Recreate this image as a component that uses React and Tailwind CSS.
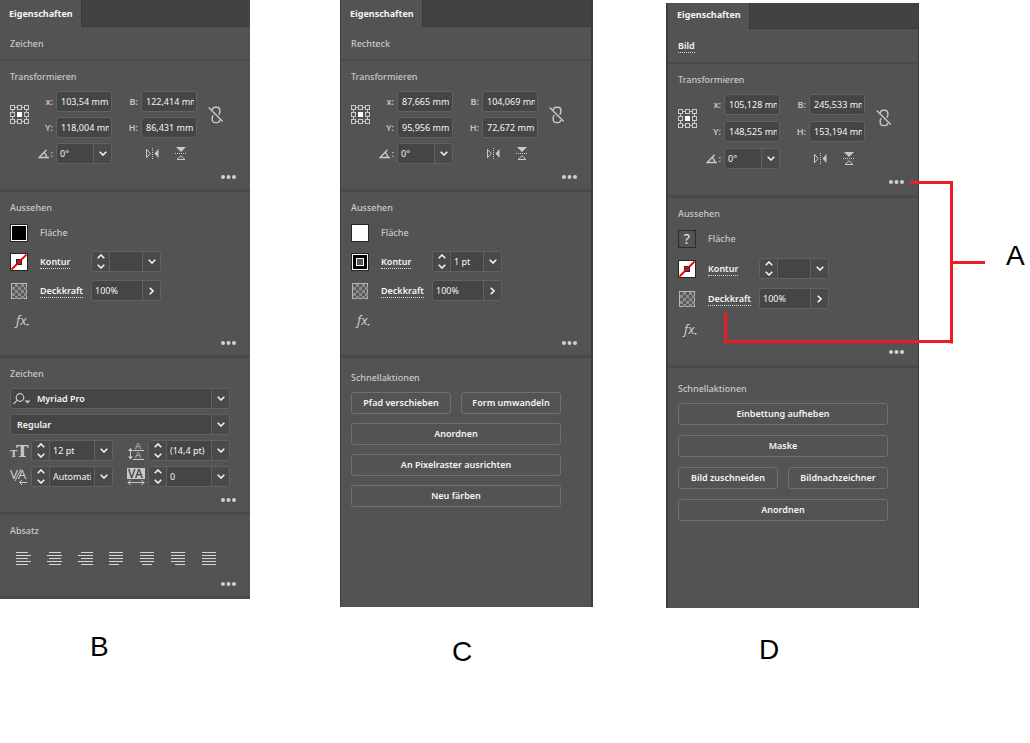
import React, { useId } from "react";

const ICON = "#c9c9c9";

/* ---------- small icons ---------- */

const ChevronDown = () => (
  <svg width="8" height="5" viewBox="0 0 8 5" fill="none" stroke="#f2f2f2" strokeWidth="1.6">
    <path d="M.7.7 4 4 7.3.7" />
  </svg>
);

const ChevronUp = () => (
  <svg width="8" height="5" viewBox="0 0 8 5" fill="none" stroke="#f2f2f2" strokeWidth="1.6">
    <path d="M.7 4.3 4 1l3.3 3.3" />
  </svg>
);

const ChevronRight = () => (
  <svg width="5" height="8" viewBox="0 0 5 8" fill="none" stroke="#f2f2f2" strokeWidth="1.6">
    <path d="M.7.7 4 4 .7 7.3" />
  </svg>
);

const ReferencePoint = () => (
  <svg width="19" height="19" viewBox="0 0 19 19" fill="none" stroke={ICON}>
    {[0.5, 7.5, 14.5].map((y) =>
      [0.5, 7.5, 14.5].map((x) =>
        x === 7.5 && y === 7.5 ? (
          <rect key={`${x}-${y}`} x="7.5" y="7.5" width="4" height="4" fill="#fff" stroke="#fff" />
        ) : (
          <rect key={`${x}-${y}`} x={x} y={y} width="4" height="4" />
        )
      )
    )}
    <path d="M5 2.5h2M12 2.5h2M5 16.5h2M12 16.5h2M2.5 5v2M2.5 12v2M16.5 5v2M16.5 12v2" />
  </svg>
);

const LinkOff = () => (
  <svg width="16" height="18" viewBox="0 0 16 18" fill="none" stroke={ICON} strokeWidth="1.4">
    <path d="M4.200 4.200a3 3 0 0 1 3-3h1.600a3 3 0 0 1 3 3v2.300a2.300 2.300 0 0 1-1.300 2" />
    <path d="M5.500 9.300a2.300 2.300 0 0 0-1.300 2v2.300a3 3 0 0 0 3 3h1.600a3 3 0 0 0 3-2.600" />
    <path d="m.7 1.500 14 14" />
  </svg>
);

const AngleIcon = () => (
  <svg width="12" height="10" viewBox="0 0 12 10" fill="none" stroke={ICON} strokeWidth="1.3">
    <path d="M8.500.700 1.200 8.500H11M6 3.500c1.700 1 2.600 2.800 2.600 5" />
  </svg>
);

const FlipHorizontal = () => (
  <svg width="14" height="11" viewBox="0 0 14 11" fill="none" stroke={ICON}>
    <path d="M1.500 1.300v8.400L5.200 5.500z" />
    <path d="M7.500 0v11" strokeDasharray="1 1" />
    <path d="M13.500 1v9L9.500 5.500z" fill={ICON} stroke="none" />
  </svg>
);

const FlipVertical = () => (
  <svg width="12" height="13" viewBox="0 0 12 13" fill="none" stroke={ICON}>
    <path d="M1 0h10L6 5z" fill={ICON} stroke="none" />
    <path d="M0 6.500h12" strokeDasharray="1 1" />
    <path d="M2 12.500h8L6 8.800z" />
  </svg>
);

const MoreDots = () => (
  <svg width="15" height="4" viewBox="0 0 15 4" fill="#d0d0d0">
    <circle cx="2" cy="2" r="2" />
    <circle cx="7.5" cy="2" r="2" />
    <circle cx="13" cy="2" r="2" />
  </svg>
);

const SearchIcon = () => (
  <svg width="18" height="12" viewBox="0 0 18 12" fill="none" stroke={ICON} strokeWidth="1.2">
    <circle cx="7" cy="4.5" r="3.8" />
    <path d="M4.300 7.200.500 11" />
    <path d="M11.500 7.500h6l-3 3z" fill={ICON} stroke="none" />
  </svg>
);

const FontSizeIcon = () => (
  <svg
    width="18"
    height="18"
    viewBox="0 0 18 18"
    fill={ICON}
    className="overflow-visible font-['DejaVu_Serif',serif] font-bold"
  >
    <text x="0" y="15" fontSize="10">T</text>
    <text x="6" y="15" fontSize="17">T</text>
  </svg>
);

const LeadingIcon = () => (
  <svg
    width="18"
    height="18"
    viewBox="0 0 18 18"
    fill={ICON}
    className="overflow-visible font-['Liberation_Sans',sans-serif]"
  >
    <text x="8" y="7" fontSize="9">A</text>
    <text x="8" y="16" fontSize="9">A</text>
    <path d="M6 8.500h11M6 17.500h11M3.500 8v8" stroke={ICON} />
    <path d="m1 9 2.500-3L6 9zM1 14.500l2.500 3 2.500-3z" />
  </svg>
);

const KerningIcon = () => (
  <svg
    width="18"
    height="18"
    viewBox="0 0 18 18"
    fill={ICON}
    className="overflow-visible font-['Noto_Sans',sans-serif]"
  >
    <text x="0" y="11" fontSize="13">V</text>
    <text x="8" y="11" fontSize="13">A</text>
    <path d="M5 13 11 1M9.500 14.500H17M12 12l-2.500 2.500L12 17" fill="none" stroke={ICON} />
  </svg>
);

const TrackingIcon = () => (
  <svg width="18" height="18" viewBox="0 0 18 18" className="overflow-visible font-['Noto_Sans',sans-serif]">
    <rect width="18" height="11" fill={ICON} />
    <text x="1" y="10" fontSize="12" fontWeight="500" fill="#3c3c3c">V</text>
    <text x="8" y="10" fontSize="12" fontWeight="500" fill="#3c3c3c">A</text>
    <path d="M1 14.500h16M3.500 12 1 14.500 3.500 17M14.500 12l2.500 2.500-2.500 2.500" fill="none" stroke={ICON} />
  </svg>
);

/* start and length of the five lines of each alignment icon */
const alignments = [
  { name: "Linksbündig", lines: [[0, 12], [0, 15], [0, 12], [0, 15], [0, 12]] },
  { name: "Zentriert", lines: [[2, 12], [0, 15], [2, 12], [0, 15], [2, 12]] },
  { name: "Rechtsbündig", lines: [[3, 12], [0, 15], [3, 12], [0, 15], [3, 12]] },
  { name: "Blocksatz links", lines: [[0, 14], [0, 14], [0, 14], [0, 14], [0, 10]] },
  { name: "Blocksatz zentriert", lines: [[0, 14], [0, 14], [0, 14], [0, 14], [2, 10]] },
  { name: "Blocksatz rechts", lines: [[0, 14], [0, 14], [0, 14], [0, 14], [4, 10]] },
  { name: "Blocksatz", lines: [[0, 14], [0, 14], [0, 14], [0, 14], [0, 14]] },
];

const AlignIcon = ({ lines }) => (
  <svg width="15" height="13" viewBox="0 0 15 13" fill="#d6d6d6">
    {lines.map(([x, w], i) => (
      <rect key={i} x={x} y={i * 3} width={w} height="1" />
    ))}
  </svg>
);

/* ---------- swatches ---------- */

const FillSwatch = ({ kind }) => {
  if (kind === "mixed") {
    return (
      <span className="w-[18px] h-[18px] border border-[#2b2b2b] flex items-center justify-center text-sm leading-4 font-medium text-[#dcdcdc]">
        ?
      </span>
    );
  }
  return (
    <svg width="18" height="18" viewBox="0 0 18 18">
      <rect width="18" height="18" fill="#262626" />
      <rect x="1" y="1" width="16" height="16" fill="#fff" />
      {kind === "black" && <rect x="2" y="2" width="14" height="14" fill="#000" />}
    </svg>
  );
};

const StrokeSwatch = ({ kind }) => (
  <svg width="18" height="18" viewBox="0 0 18 18">
    <rect width="18" height="18" fill="#262626" />
    <rect x="1" y="1" width="16" height="16" fill="#fff" />
    {kind === "none" ? (
      <>
        <rect x="6.5" y="6.5" width="5" height="5" fill="#535353" stroke="#262626" />
        <path d="M1.500 16.500l15-15" stroke="#f00000" strokeWidth="1.8" />
      </>
    ) : (
      <>
        <rect x="2" y="2" width="14" height="14" fill="#000" />
        <rect x="5.5" y="5.5" width="7" height="7" fill="#535353" stroke="#fff" />
      </>
    )}
  </svg>
);

const OpacitySwatch = () => (
  <svg width="18" height="18" viewBox="0 0 18 18">
    <rect x="1.5" y="1.5" width="15" height="15" fill="#5a5a5a" stroke="#b8b8b8" />
    {[0, 1, 2, 3, 4].map((r) =>
      [0, 1, 2, 3, 4].map(
        (c) =>
          (r + c) % 2 === 1 && (
            <rect key={`${r}-${c}`} x={2 + c * 3} y={2 + r * 3} width="3" height="3" fill="#8c8c8c" />
          )
      )
    )}
  </svg>
);

/* ---------- controls ---------- */

const boxClass = "h-[21px] flex rounded-[3px] border border-[#616161] bg-[#454545] overflow-hidden";
const cellClass = "w-[18px] shrink-0 flex flex-col items-center justify-center bg-[#4a4a4a] border-[#616161]";

const TextField = ({ id, label, value }) => (
  <>
    <label htmlFor={id} className="text-right font-semibold text-[#c4c4c4]">
      {label}
    </label>
    <div className={boxClass}>
      <input id={id} defaultValue={value} className="w-full min-w-0 ml-1 mr-[2px] outline-none text-[#f5f5f5]" />
    </div>
  </>
);

const Combo = ({ id, label, value, stepper, arrow = "down", className = "" }) => (
  <div className={`${boxClass} ${className}`}>
    {stepper && (
      <button type="button" aria-label={`${label} ändern`} className={`${cellClass} gap-[5px] border-r`}>
        <ChevronUp />
        <ChevronDown />
      </button>
    )}
    <input
      id={id}
      aria-label={id ? undefined : label}
      defaultValue={value}
      className="flex-1 w-full min-w-0 mx-[3px] outline-none text-[#f5f5f5]"
    />
    <button type="button" aria-label={`${label} auswählen`} className={`${cellClass} border-l`}>
      {arrow === "right" ? <ChevronRight /> : <ChevronDown />}
    </button>
  </div>
);

const SelectBox = ({ label, value, icon }) => (
  <div className={boxClass}>
    {icon && <span className="pl-[2px] flex items-center">{icon}</span>}
    <div className="flex-1 grid grid-cols-[1fr_18px]">
      <select
        aria-label={label}
        defaultValue={value}
        className="col-span-2 row-start-1 col-start-1 appearance-none pl-[6px] outline-none font-semibold text-[#f5f5f5]"
      >
        <option>{value}</option>
      </select>
      <span className={`${cellClass} border-l row-start-1 col-start-2 pointer-events-none`}>
        <ChevronDown />
      </span>
    </div>
  </div>
);

/* ---------- sections ---------- */

const Section = ({ title, roomy, children }) => (
  <section
    className={`flex flex-col pt-2 pl-[10px] pr-[14px] border-b-[3px] border-[#4a4a4a] ${roomy ? "pb-[9px]" : "pb-2"}`}
  >
    <h2 className="leading-4 mb-[6px] font-medium text-[#c8c8c8]">{title}</h2>
    {children}
    <button type="button" aria-label={`${title}: weitere Optionen`} className="mt-[9px] ml-auto h-2 flex items-center">
      <MoreDots />
    </button>
  </section>
);

const Transform = ({ x, y, w, h, roomy }) => {
  const id = useId();
  return (
    <Section title="Transformieren" roomy={roomy}>
      <div
        className={`grid grid-cols-[20px_20px_56px_23px_56px_24px] gap-x-[3px] items-center ${
          roomy ? "gap-y-[6px]" : "gap-y-[5px]"
        }`}
      >
        <button type="button" aria-label="Bezugspunkt" className="row-span-2">
          <ReferencePoint />
        </button>
        <TextField id={`${id}x`} label="x:" value={x} />
        <TextField id={`${id}w`} label="B:" value={w} />
        <button type="button" aria-label="Proportionen erhalten" className="row-span-2 justify-self-end">
          <LinkOff />
        </button>
        <TextField id={`${id}y`} label="Y:" value={y} />
        <TextField id={`${id}h`} label="H:" value={h} />
        <label
          htmlFor={`${id}a`}
          className="col-span-2 flex items-center justify-end gap-px font-semibold text-[#c4c4c4]"
        >
          <AngleIcon />:
        </label>
        <Combo id={`${id}a`} label="Winkel" value="0°" />
        <div className="col-span-2 flex items-center gap-4 pl-[30px]">
          <button type="button" aria-label="Horizontal spiegeln">
            <FlipHorizontal />
          </button>
          <button type="button" aria-label="Vertikal spiegeln">
            <FlipVertical />
          </button>
        </div>
      </div>
    </Section>
  );
};

const dotted = "leading-[13px] font-semibold text-[#f5f5f5] border-b border-dotted border-[#d8d8d8]";

const Appearance = ({ fill, stroke, weight, roomy }) => (
  <Section title="Aussehen" roomy={roomy}>
    <div className={`flex flex-col ${roomy ? "gap-[9px]" : "gap-2"}`}>
      <div className="h-[21px] flex items-center gap-3">
        <button type="button" aria-label="Flächenfarbe">
          <FillSwatch kind={fill} />
        </button>
        <span className="font-medium text-[#c8c8c8]">Fläche</span>
      </div>
      <div className="h-[21px] flex items-center">
        <button type="button" aria-label="Konturfarbe">
          <StrokeSwatch kind={stroke} />
        </button>
        <div className="w-[63px] pl-3 flex">
          <button type="button" className={dotted}>Kontur</button>
        </div>
        <Combo label="Konturstärke" value={weight} stepper className="w-[70px]" />
      </div>
      <div className="h-[21px] flex items-center">
        <OpacitySwatch />
        <div className="w-[63px] pl-3 flex">
          <button type="button" className={dotted}>Deckkraft</button>
        </div>
        <Combo label="Deckkraft" value="100%" arrow="right" className="w-[70px]" />
      </div>
      <button type="button" aria-label="Effekt hinzufügen" className="h-[21px] ml-[6px] self-start flex items-center">
        <span className="text-[13px] italic leading-4 text-[#c9c9c9]">fx</span>
        <svg width="3" height="2" viewBox="0 0 3 2" className="mt-[10px]">
          <path d="M0 0h3L1.500 2z" fill={ICON} />
        </svg>
      </button>
    </div>
  </Section>
);

const Character = () => (
  <Section title="Zeichen">
    <div className="w-[220px] flex flex-col gap-[5px]">
      <SelectBox label="Schriftfamilie" value="Myriad Pro" icon={<SearchIcon />} />
      <SelectBox label="Schriftschnitt" value="Regular" />
      <div className="grid grid-cols-2 gap-x-[14px] gap-y-[5px]">
        <div className="flex items-center gap-[3px]">
          <FontSizeIcon />
          <Combo label="Schriftgrad" value="12 pt" stepper className="flex-1" />
        </div>
        <div className="flex items-center gap-[3px]">
          <LeadingIcon />
          <Combo label="Zeilenabstand" value="(14,4 pt)" stepper className="flex-1" />
        </div>
        <div className="flex items-center gap-[3px]">
          <KerningIcon />
          <Combo label="Kerning" value="Automatisch" stepper className="flex-1" />
        </div>
        <div className="flex items-center gap-[3px]">
          <TrackingIcon />
          <Combo label="Laufweite" value="0" stepper className="flex-1" />
        </div>
      </div>
    </div>
  </Section>
);

const Paragraph = () => (
  <Section title="Absatz">
    <div className="h-[26px] flex items-center gap-4 pl-[6px]">
      {alignments.map((a) => (
        <button key={a.name} type="button" aria-label={a.name}>
          <AlignIcon lines={a.lines} />
        </button>
      ))}
    </div>
  </Section>
);

/* each row holds one full button or two halves */
const QuickActions = ({ rows, roomy }) => (
  <section className={`px-[10px] ${roomy ? "pt-[13px] pb-[87px]" : "pt-3 pb-[100px]"}`}>
    <h2 className="leading-4 mb-[6px] font-medium text-[#c8c8c8]">Schnellaktionen</h2>
    <div className={`w-[210px] flex flex-col ${roomy ? "gap-[10px]" : "gap-[9px]"}`}>
      {rows.map((row) => (
        <div key={row[0]} className="flex gap-[10px]">
          {row.map((label) => (
            <button
              key={label}
              type="button"
              className="flex-1 h-[22px] rounded-[3px] border border-[#707070] font-semibold text-[#f5f5f5] whitespace-nowrap"
            >
              {label}
            </button>
          ))}
        </div>
      ))}
    </div>
  </section>
);

const Panel = ({ context, linked, className = "", children }) => (
  <div className={`bg-[#535353] text-[9px] font-['Noto_Sans',sans-serif] ${className}`}>
    <div className="flex bg-[#424242]">
      <h1
        className={`w-[81px] pl-[9px] font-bold text-[#f5f5f5] bg-[#535353] ${
          linked ? "h-[26px] leading-6" : "h-[27px] leading-7"
        }`}
      >
        Eigenschaften
      </h1>
      <div className="flex-1 border-l border-b border-[#383838]" />
    </div>
    <div
      className={`pt-px pl-[10px] border-b-2 border-[#4a4a4a] flex items-center font-medium text-[#c8c8c8] ${
        linked ? "h-[35px]" : "h-[34px]"
      }`}
    >
      {linked ? (
        <button type="button" className={dotted}>{context}</button>
      ) : (
        context
      )}
    </div>
    {children}
  </div>
);

const Caption = ({ className, children }) => (
  <figcaption className={`text-[28px] leading-8 text-black font-['Liberation_Sans',sans-serif] ${className}`}>
    {children}
  </figcaption>
);

/* bracket that ties the "more" dots and the dotted label to the letter A */
const Callout = () => (
  <div className="absolute left-[58px] top-[181px] flex items-start pointer-events-none">
    <svg width="262" height="163" viewBox="0 0 262 163" fill="none" stroke="#ee1c25" strokeWidth="3">
      <path d="M186 1.500h41.500v161M1.500 131v29.500h226M227 81.500h34" />
    </svg>
    <span className="pl-5 pt-[59px] text-[28px] leading-8 text-black font-['Liberation_Sans',sans-serif]">A</span>
  </div>
);

const App = () => {
  return (
    <main className="flex items-start bg-white pb-16">
      <figure className="flex-340">
        <Panel context="Zeichen" className="w-[250px]">
          <Transform x="103,54 mm" y="118,004 mm" w="122,414 mm" h="86,431 mm" />
          <Appearance fill="black" stroke="none" weight="" />
          <Character />
          <Paragraph />
        </Panel>
        <Caption className="pt-8 pl-[90px]">B</Caption>
      </figure>

      <figure className="flex-326">
        <Panel context="Rechteck" className="w-[253px] border-l border-r-2 border-[#3c3c3c]">
          <Transform x="87,665 mm" y="95,956 mm" w="104,069 mm" h="72,672 mm" />
          <Appearance fill="white" stroke="solid" weight="1 pt" />
          <QuickActions
            rows={[["Pfad verschieben", "Form umwandeln"], ["Anordnen"], ["An Pixelraster ausrichten"], ["Neu färben"]]}
          />
        </Panel>
        <Caption className="pt-[29px] pl-28">C</Caption>
      </figure>

      <figure className="flex-364 relative pt-[3px]">
        <Panel context="Bild" linked className="w-[253px] border-l-2 border-r border-[#3c3c3c]">
          <Transform x="105,128 mm" y="148,525 mm" w="245,533 mm" h="153,194 mm" roomy />
          <Appearance fill="mixed" stroke="none" weight="" roomy />
          <QuickActions
            roomy
            rows={[["Einbettung aufheben"], ["Maske"], ["Bild zuschneiden", "Bildnachzeichner"], ["Anordnen"]]}
          />
        </Panel>
        <Callout />
        <Caption className="pt-[26px] pl-[93px]">D</Caption>
      </figure>
    </main>
  );
};

export default App;
